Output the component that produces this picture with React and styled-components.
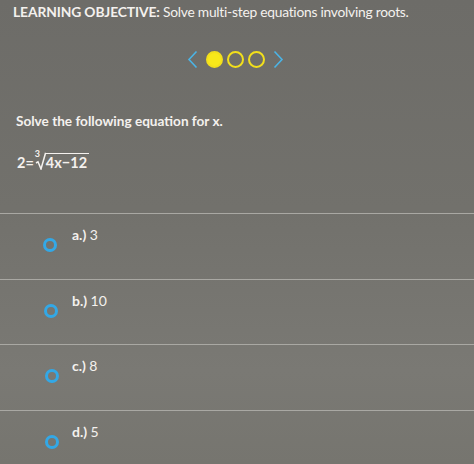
import React from "react";
import styled, { createGlobalStyle } from "styled-components";

const GlobalStyle = createGlobalStyle`
  html, body { margin: 0; padding: 0; }
  body {
    width: 474px;
    height: 464px;
    overflow: hidden;
    font-family: Lato, "Open Sans", sans-serif;
  }
`;

const Page = styled.div`
  width: 474px;
  height: 464px;
  box-sizing: border-box;
  background: linear-gradient(180deg, #6d6c68 0%, #72716c 45%, #7a7974 80%, #76756f 100%);
  color: #f4f1ee;
  display: flex;
  flex-direction: column;
`;

const Objective = styled.div`
  padding: 2px 0 0 13px;
  font-size: 13.8px;
  line-height: 20px;
  letter-spacing: -0.25px;
  b { font-weight: 700; letter-spacing: -0.1px; }
`;

const Pager = styled.div`
  display: flex;
  justify-content: center;
  align-items: center;
  gap: 4px;
  margin: 28px 0 0 -4px;
  height: 20px;
`;

const Chevron = styled.svg`
  width: 11px;
  height: 19px;
  margin: 0 4px;
`;

const Dot = styled.span`
  width: 17px;
  height: 17px;
  box-sizing: border-box;
  border-radius: 50%;
  border: 2.5px solid #f2df1c;
  background: ${(p) => (p.$active ? "#f8e81a" : "transparent")};
`;

const Prompt = styled.div`
  margin: 44px 0 0 16px;
  font-size: 13.6px;
  font-weight: 700;
`;

const Equation = styled.div`
  margin: 24px 0 0 17px;
  display: flex;
  align-items: flex-end;
  font-size: 14.5px;
  font-weight: 700;
  height: 20px;
`;

const Radical = styled.span`
  display: inline-flex;
  align-items: flex-end;
  position: relative;
  padding-left: 10px;
  margin-left: 1px;
`;

const RootSign = styled.svg`
  position: absolute;
  left: 0;
  bottom: 1px;
  width: 11px;
  height: 18px;
`;

const RootIndex = styled.span`
  position: absolute;
  left: 0;
  top: -4px;
  font-size: 9px;
  line-height: 9px;
`;

const Radicand = styled.span`
  border-top: 1.5px solid #f4f1ee;
  padding: 1px 2px 0 1px;
  line-height: 16px;
`;

const Choices = styled.div`
  margin-top: 42px;
  display: flex;
  flex-direction: column;
`;

const Choice = styled.div`
  height: 64.5px;
  border-top: 1.5px solid #a9a8a3;
  display: grid;
  grid-template-columns: 72px 1fr;
`;

const Radio = styled.span`
  width: 14px;
  height: 14px;
  box-sizing: border-box;
  border-radius: 50%;
  border: 3px solid #33a8e6;
  margin: 24px 0 0 ${(p) => p.$x}px;
`;

const Label = styled.span`
  padding-top: 12px;
  font-size: 14px;
  font-weight: 700;
  b { font-weight: 400; }
`;

const choices = [
  { key: "a", value: "3", x: 43 },
  { key: "b", value: "10", x: 44 },
  { key: "c", value: "8", x: 45 },
  { key: "d", value: "5", x: 45 },
];

export default function App() {
  return (
    <>
      <GlobalStyle />
      <Page>
        <Objective>
          <b>LEARNING OBJECTIVE:</b> Solve multi-step equations involving roots.
        </Objective>
        <Pager>
          <Chevron viewBox="0 0 11 19">
            <path d="M9.5 1.5 L2 9.5 L9.5 17.5" fill="none" stroke="#4bb4e6" strokeWidth="1.6" />
          </Chevron>
          <Dot $active />
          <Dot />
          <Dot />
          <Chevron viewBox="0 0 11 19">
            <path d="M1.5 1.5 L9 9.5 L1.5 17.5" fill="none" stroke="#4bb4e6" strokeWidth="1.6" />
          </Chevron>
        </Pager>
        <Prompt>Solve the following equation for x.</Prompt>
        <Equation>
          2=
          <Radical>
            <RootIndex>3</RootIndex>
            <RootSign viewBox="0 0 11 18">
              <path d="M1 11 L3 9.8 L6 17 L10.6 0.8" fill="none" stroke="#f4f1ee" strokeWidth="1.5" />
            </RootSign>
            <Radicand>4x−12</Radicand>
          </Radical>
        </Equation>
        <Choices>
          {choices.map((c) => (
            <Choice key={c.key}>
              <Radio $x={c.x} />
              <Label>
                {c.key}.) <b>{c.value}</b>
              </Label>
            </Choice>
          ))}
        </Choices>
      </Page>
    </>
  );
}
